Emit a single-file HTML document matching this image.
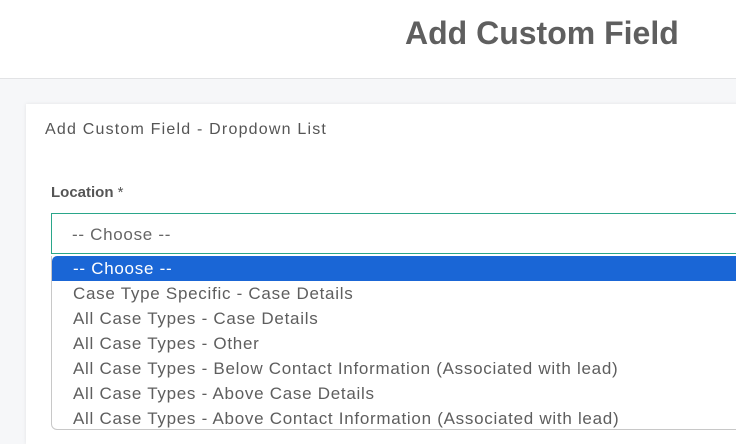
<!DOCTYPE html>
<html><head><style>
body{margin:0;width:736px;height:440px;overflow:hidden;background:#f6f7f9;font-family:"Liberation Sans",sans-serif;color:#5a5a5a;position:relative}
.hdr{position:absolute;left:0;top:0;width:736px;height:78px;background:#fff;border-bottom:1px solid #e2e3e5}
.hdr h1{position:absolute;left:405px;top:15px;margin:0;font-size:32px;font-weight:bold;color:#5f5f5f;white-space:nowrap}
.card{position:absolute;left:26px;top:104px;width:720px;height:340px;background:#fff;box-shadow:0 0 4px rgba(0,0,0,.08)}
.t{position:absolute;left:45px;top:121px;font-size:16px;letter-spacing:1.2px;color:#555;white-space:nowrap}
.l{position:absolute;left:51px;top:184px;font-size:15px;font-weight:bold;color:#555}
.l span{font-weight:normal}
.sel{position:absolute;left:51px;top:213px;width:700px;height:39px;border:1px solid #2aa68a;box-sizing:content-box}
.sel div{position:absolute;left:20px;top:11px;font-size:17px;letter-spacing:0.7px;color:#666}
.dd{position:absolute;left:51px;top:256px;width:700px;height:173px;border:1px solid #c8c8c8;border-top:none;border-radius:0 0 0 6px;background:#fff}
.dd div{height:25px;line-height:26px;padding-left:21px;font-size:17px;letter-spacing:0.72px;color:#5e5e5e;white-space:nowrap}
.dd div.a{background:#1a66d6;color:#fff;border-radius:5px 0 0 0}
</style></head><body>
<div class="hdr"><h1>Add Custom Field</h1></div>
<div class="card"></div>
<div class="t">Add Custom Field - Dropdown List</div>
<div class="l">Location <span>*</span></div>
<div class="sel"><div>-- Choose --</div></div>
<div class="dd">
<div class="a">-- Choose --</div>
<div>Case Type Specific - Case Details</div>
<div>All Case Types - Case Details</div>
<div>All Case Types - Other</div>
<div>All Case Types - Below Contact Information (Associated with lead)</div>
<div>All Case Types - Above Case Details</div>
<div>All Case Types - Above Contact Information (Associated with lead)</div>
</div>
</body></html>
